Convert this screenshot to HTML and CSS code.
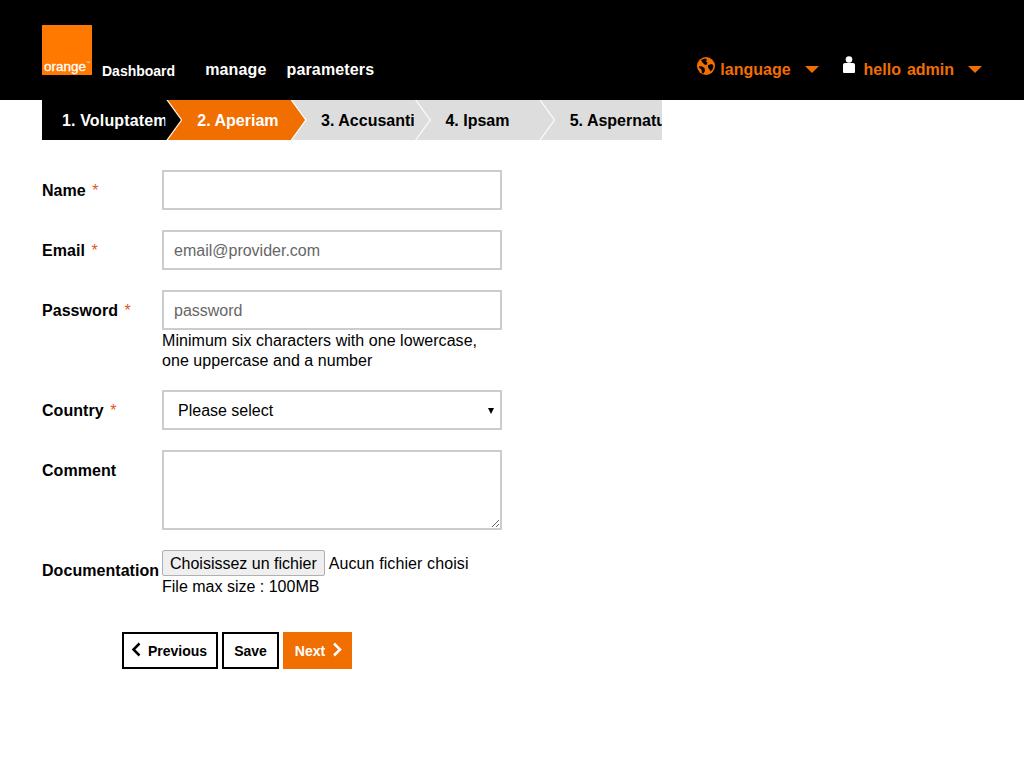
FILE: index.html
```html
<!DOCTYPE html>
<html lang="en">
<head>
<meta charset="utf-8">
<title>Form</title>
<link rel="stylesheet" href="styles.css">
</head>
<body>
<header class="topbar">
  <div class="brand">
    <div class="logo"><span class="logo-text">orange</span><span class="logo-tm">™</span></div>
    <a class="brand-link">Dashboard</a>
  </div>
  <nav class="mainnav">
    <a class="nav-link">manage</a>
    <a class="nav-link">parameters</a>
  </nav>
  <div class="usernav">
    <a class="user-item">
      <svg class="globe" width="18" height="18" viewBox="0 0 18 18"><circle cx="9" cy="9" r="9" fill="#f16e00"/><path d="M4 3l4-1.500 2 1-1 2 1.500 1-1 2.500-2-.5-2-2zM2 9l3 .5 2.500 1.500.5 3-1.500 2.500-1.500-.5-.5-3.500-2-1.500zM11 8l4-1 1.500 2-1 3.500-2 2-1-2-1.500-2z" fill="#000"/></svg>
      <span class="user-text">language</span><span class="caret"></span>
    </a>
    <a class="user-item">
      <svg class="person" width="12" height="17" viewBox="0 0 12 17"><circle cx="6" cy="3.500" r="3.300" fill="#fff"/><path d="M2 7h8q2 0 2 2v7q0 1-1 1H1q-1 0-1-1V9q0-2 2-2z" fill="#fff"/></svg>
      <span class="user-text">hello admin</span><span class="caret"></span>
    </a>
  </div>
</header>
<main class="page">
  <ol class="steps">
    <li class="step step-done"><span class="step-label">1. Voluptatem</span></li>
    <li class="step step-active"><span class="step-label">2. Aperiam</span></li>
    <li class="step"><span class="step-label">3. Accusanti</span></li>
    <li class="step"><span class="step-label">4. Ipsam</span></li>
    <li class="step"><span class="step-label">5. Aspernatu</span></li>
  </ol>
  <form class="form">
    <div class="row">
      <label class="label">Name <span class="req">*</span></label>
      <div class="field"><input class="control" type="text"></div>
    </div>
    <div class="row">
      <label class="label">Email <span class="req">*</span></label>
      <div class="field"><input class="control" type="text" placeholder="email@provider.com"></div>
    </div>
    <div class="row">
      <label class="label">Password <span class="req">*</span></label>
      <div class="field">
        <input class="control" type="text" placeholder="password">
        <div class="help help-wide">Minimum six characters with one lowercase, one uppercase and a number</div>
      </div>
    </div>
    <div class="row">
      <label class="label">Country <span class="req">*</span></label>
      <div class="field select-wrap"><select class="control select"><option>Please select</option></select></div>
    </div>
    <div class="row">
      <label class="label">Comment</label>
      <div class="field"><textarea class="control area"></textarea></div>
    </div>
    <div class="row row-file">
      <label class="label">Documentation</label>
      <div class="field">
        <div class="file"><button class="file-btn" type="button">Choisissez un fichier</button><span class="file-name">Aucun fichier choisi</span></div>
        <div class="help">File max size : 100MB</div>
      </div>
    </div>
    <div class="actions">
      <button class="btn btn-prev" type="button"><svg class="chev" width="10" height="16" viewBox="0 0 10 16"><path d="M8.500 1.500L2.500 7.500l6 6" fill="none" stroke="currentColor" stroke-width="2.500"/></svg>Previous</button>
      <button class="btn" type="button">Save</button>
      <button class="btn btn-primary" type="button">Next<svg class="chev chev-next" width="10" height="16" viewBox="0 0 10 16"><path d="M2 1.500l6 6-6 6" fill="none" stroke="currentColor" stroke-width="2.500"/></svg></button>
    </div>
  </form>
</main>
</body>
</html>
```
FILE: styles.css
```css
* { box-sizing: border-box; }
html, body { margin: 0; padding: 0; }
body {
  font-family: "Liberation Sans", Arial, sans-serif;
  font-size: 16px;
  line-height: 20px;
  color: #000;
  background: #fff;
}
.topbar {
  height: 100px;
  background: #000;
  display: flex;
  align-items: flex-start;
  padding: 25px 42px 0;
  font-weight: 700;
  color: #fff;
}
.brand { display: flex; align-items: flex-end; }
.logo {
  width: 50px;
  height: 50px;
  background: #ff7900;
  position: relative;
  color: #fff;
}
.logo-text {
  position: absolute;
  left: 2px;
  bottom: 1px;
  font-size: 13.500px;
  line-height: 14px;
  font-weight: 400;
  -webkit-text-stroke: .3px #fff;
}
.logo-tm { position: absolute; left: 44px; bottom: 10px; font-size: 4px; line-height: 5px; font-weight: 400; }
.brand-link { font-size: 14px; margin-left: 10px; line-height: 18px; position: relative; top: 5px; }
.mainnav { display: flex; gap: 20px; margin-left: 30px; padding-top: 35px; font-size: 16px; letter-spacing: .15px; }
.usernav {
  margin-left: auto;
  display: flex;
  gap: 24px;
  padding-top: 30px;
  color: #f16e00;
  font-size: 16px;
}
.user-item { display: flex; align-items: flex-start; }
.globe { margin-right: 5px; margin-top: 2px; }
.person { margin-right: 9px; margin-top: 1px; }
.user-text { padding-top: 5px; word-spacing: 1.500px; }
.caret {
  width: 0;
  height: 0;
  border-left: 7px solid transparent;
  border-right: 7px solid transparent;
  border-top: 7px solid #f16e00;
  margin: 11px 0 0 14px;
}
.page { padding: 0 42px; }
.steps {
  list-style: none;
  margin: 0;
  padding: 0;
  width: 620px;
  height: 40px;
  display: flex;
  overflow: hidden;
  background: #ddd;
  font-weight: 700;
  font-size: 16px;
}
.step {
  flex: 0 0 124.300px;
  min-width: 0;
  height: 40px;
  line-height: 41px;
  padding-left: 30.500px;
  position: relative;
  background: #ddd;
  white-space: nowrap;
}
.step-label { display: block; }
.step-done { background: #000; color: #fff; padding-left: 20px; z-index: 5; letter-spacing: .15px; }
.step-active { background: #f16e00; color: #fff; z-index: 4; padding-left: 31px; }
.step:nth-child(3) { z-index: 3; }
.step:nth-child(4) { z-index: 2; }
.step::before,
.step::after {
  content: "";
  position: absolute;
  top: 0;
  left: calc(100% - 1px);
  width: 17px;
  height: 40px;
}
.step::before {
  background: #fff;
  clip-path: polygon(1px 0, 2.500px 0, 17px 20px, 2.500px 40px, 1px 40px, 15.500px 20px);
}
.step::after {
  background: inherit;
  clip-path: polygon(0 0, 1px 0, 15.500px 20px, 1px 40px, 0 40px);
}
.form { padding-top: 30px; }
.row { display: flex; margin-bottom: 20px; }
.label { flex: 0 0 120px; font-weight: 700; line-height: 20px; padding-top: 11px; white-space: nowrap; letter-spacing: .05px; }
.req { color: #e2571e; font-weight: 400; margin-left: 2px; }
.field { width: 340px; }
.select-wrap { position: relative; }
.select-wrap::after {
  content: "";
  position: absolute;
  top: 18px;
  left: 326px;
  border-left: 3px solid transparent;
  border-right: 3px solid transparent;
  border-top: 6px solid #000;
  pointer-events: none;
}
.control {
  display: block;
  width: 340px;
  height: 40px;
  border: 2px solid #ccc;
  border-radius: 0;
  padding: 9px 10px 7px;
  font: 16px/20px "Liberation Sans", Arial, sans-serif;
  color: #000;
  background: #fff;
  outline: none;
}
.control::placeholder { color: #666; opacity: 1; }
.select { appearance: none; padding-left: 14px; }
.area { height: 80px; }
.help { line-height: 20px; padding-top: 1px; margin-bottom: -1px; }
.help-wide { letter-spacing: .05px; }
.row-file { margin-bottom: 36px; }
.file { display: flex; align-items: center; height: 26px; }
.file-btn {
  font: 16px "Liberation Sans", Arial, sans-serif;
  height: 26px;
  padding: 2px 7px 0;
  background: #efefef;
  border: 1px solid #b0b0b0;
  border-radius: 2px;
  color: #000;
}
.file-name { margin-left: 4px; padding-top: 1px; letter-spacing: .1px; }
.actions { display: flex; gap: 4px; margin-left: 80px; }
.btn {
  height: 37px;
  padding: 0 10px;
  border: 2px solid #000;
  background: #fff;
  color: #000;
  font: 700 14px "Liberation Sans", Arial, sans-serif;
  display: flex;
  align-items: center;
}
.btn-prev { padding: 0 9px 0 7px; }
.btn-primary { background: #f16e00; border-color: #f16e00; color: #fff; padding-right: 8px; }
.chev { margin-right: 7px; position: relative; top: -1px; }
.chev-next { margin: 0 0 0 7px; }
```
